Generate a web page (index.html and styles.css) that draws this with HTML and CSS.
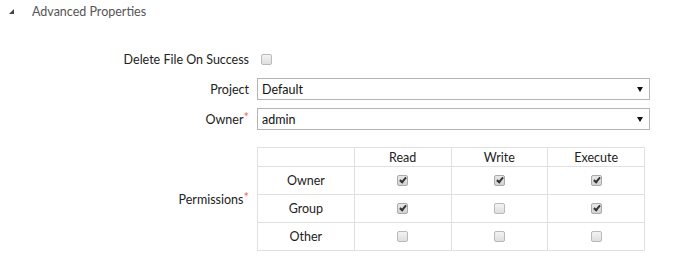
FILE: index.html
```html
<!DOCTYPE html>
<html>
<head>
<meta charset="utf-8">
<link rel="stylesheet" href="styles.css">
</head>
<body>
<div class="section-head">
  <svg class="tri" width="5" height="5" viewBox="0 0 5 5"><polygon points="5,0 5,5 0,5" fill="#444"/></svg>
  <span class="section-title">Advanced Properties</span>
</div>
<div class="form">
  <div class="label"><span>Delete File On Success</span></div>
  <div class="ctrl"><span class="cb"></span></div>

  <div class="label"><span>Project</span></div>
  <div class="ctrl"><div class="select"><span>Default</span><svg width="6" height="5" viewBox="0 0 6 5"><polygon points="0,0 6,0 3,5" fill="#111"/></svg></div></div>

  <div class="label"><span>Owner<span class="req">*</span></span></div>
  <div class="ctrl"><div class="select"><span>admin</span><svg width="6" height="5" viewBox="0 0 6 5"><polygon points="0,0 6,0 3,5" fill="#111"/></svg></div></div>

  <div class="label perm-label"><span>Permissions<span class="req">*</span></span></div>
  <div class="ctrl perm-ctrl">
    <table class="perm">
      <tr class="hdr"><th></th><th>Read</th><th>Write</th><th>Execute</th></tr>
      <tr><td>Owner</td><td><span class="cb on"></span></td><td><span class="cb on"></span></td><td><span class="cb on"></span></td></tr>
      <tr><td>Group</td><td><span class="cb on"></span></td><td><span class="cb"></span></td><td><span class="cb on"></span></td></tr>
      <tr><td>Other</td><td><span class="cb"></span></td><td><span class="cb"></span></td><td><span class="cb"></span></td></tr>
    </table>
  </div>
</div>
</body>
</html>
```
FILE: styles.css
```css
html, body {
  margin: 0;
  padding: 0;
  background: #fff;
}
body {
  font-family: Lato, "Open Sans", sans-serif;
  font-size: 12.5px;
  color: #222;
}
.section-head {
  display: flex;
  align-items: center;
  height: 22px;
  padding-left: 9px;
}
.tri {
  display: block;
  margin-top: 1px;
}
.section-title {
  margin-left: 18px;
  color: #555;
  font-size: 12.5px;
}
.form {
  display: grid;
  grid-template-columns: 249px 393px;
  column-gap: 8px;
  row-gap: 8px;
  padding-top: 26px;
}
.label {
  display: flex;
  align-items: center;
  justify-content: flex-end;
  height: 22px;
  white-space: nowrap;
}
.ctrl {
  display: flex;
  align-items: center;
  height: 22px;
}
.req {
  color: #ef7070;
  font-size: 13px;
  position: relative;
  top: -2px;
  margin-left: 0;
}
.select {
  box-sizing: border-box;
  width: 393px;
  height: 22px;
  border: 1px solid #b4b4b4;
  display: flex;
  align-items: center;
  justify-content: space-between;
  padding: 0 6px 0 4px;
  color: #111;
}
.select svg {
  display: block;
}
.cb {
  display: inline-block;
  box-sizing: border-box;
  width: 11px;
  height: 11px;
  border: 1px solid #b9b9b9;
  border-radius: 2px;
  background: linear-gradient(#f3f3f3, #dedede);
  vertical-align: middle;
  position: relative;
}
.ctrl > .cb {
  margin-left: 4px;
}
.cb.on {
  background: linear-gradient(#e8e8e8, #d2d2d2);
  border-color: #aaa;
}
.cb.on::after {
  content: "";
  position: absolute;
  left: 3px;
  top: 0px;
  width: 2px;
  height: 5px;
  border-right: 2px solid #333;
  border-bottom: 2px solid #333;
  transform: rotate(40deg);
}
.perm-label {
  height: 104px;
  margin-top: 9px;
}
.perm-ctrl {
  height: 104px;
  margin-top: 9px;
  align-items: flex-start;
}
.perm {
  border-collapse: collapse;
  width: 388px;
  table-layout: fixed;
}
.perm th, .perm td {
  border: 1px solid #e0e0e0;
  text-align: center;
  padding: 0;
  font-weight: normal;
  color: #222;
}
.perm th {
  height: 18px;
}
.perm td {
  height: 27px;
}
.perm td .cb {
  display: block;
  margin: 0 auto;
}
```
